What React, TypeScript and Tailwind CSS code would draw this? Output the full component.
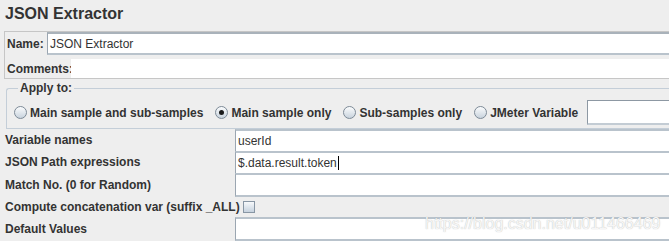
import React from "react";

const FONT = { fontFamily: '"Liberation Sans", Arial, sans-serif' };

function Radio({ checked }: { checked?: boolean }) {
  return (
    <span className="relative inline-flex h-[13px] w-[13px] shrink-0 items-center justify-center rounded-full border border-[#7d8a97] bg-gradient-to-b from-[#fbfcfd] to-[#c9d3dd]">
      {checked && <span className="h-[5px] w-[5px] rounded-full bg-[#1a1a1a]" />}
    </span>
  );
}

function RadioItem({ label, checked, first }: { label: string; checked?: boolean; first?: boolean }) {
  return (
    <div className={`flex items-center gap-[3px] ${first ? "" : "ml-[12px]"}`}>
      <Radio checked={checked} />
      <span className="font-bold">{label}</span>
    </div>
  );
}

function FieldRow({ label, value, cursor, bottom }: { label: string; value?: string; cursor?: boolean; bottom?: boolean }) {
  return (
    <div className="flex">
      <div className="flex w-[235px] shrink-0 items-center pl-[5px] font-bold">{label}</div>
      <div
        className={`flex flex-1 items-center border-l border-t-2 border-l-[#9ba6b1] border-t-[#b9c3cc] bg-white pl-[2px] h-[22px] ${
          bottom ? "h-[24px] border-b-2 border-b-[#b9c3cc]" : ""
        }`}
      >
        <span>{value}</span>
        {cursor && <span className="ml-[1px] inline-block h-[14px] w-[1px] bg-black" />}
      </div>
    </div>
  );
}

export default function App() {
  return (
    <div
      className="relative h-[241px] w-[669px] overflow-hidden bg-[#eeeeee] text-[12px] leading-[14px] text-[#333333]"
      style={FONT}
    >
      {/* Title */}
      <div className="h-[31px] pl-[5px] pt-[5px] text-[16px] font-bold leading-[18px] text-[#333333]">
        JSON Extractor
      </div>

      {/* Name / Comments box */}
      <div className="ml-[4px] h-[48px] border border-r-0 border-[#c6c6c6]">
        <div className="flex h-[23px]">
          <div className="flex w-[42px] shrink-0 items-center pl-[2px] font-bold">Name:</div>
          <div className="flex flex-1 items-center border-b-2 border-l border-t-2 border-b-[#b9c3cc] border-l-[#9ba6b1] border-t-[#a9b2ba] bg-white pl-[2px]">
            JSON Extractor
          </div>
        </div>
        <div className="flex h-[23px] pt-[4px]">
          <div className="flex w-[66px] shrink-0 items-center pl-[2px] font-bold">Comments:</div>
          <div className="flex-1 bg-white" />
        </div>
      </div>

      {/* Apply to fieldset */}
      <fieldset className="ml-[6px] mt-[2px] h-[48px] rounded-tl-[3px] border border-r-0 border-[#c4ced8] pl-[7px]">
        <legend className="ml-[4px] px-[2px] font-bold leading-[14px]">Apply to:</legend>
        <div className="mt-[5px] flex h-[25px] items-center">
          <RadioItem first label="Main sample and sub-samples" />
          <RadioItem checked label="Main sample only" />
          <RadioItem label="Sub-samples only" />
          <RadioItem label="JMeter Variable" />
          <div className="ml-[9px] h-[25px] flex-1 border-b-2 border-l border-t border-b-[#c3ccd4] border-l-[#8d98a3] border-t-[#8d98a3] bg-white" />
        </div>
      </fieldset>

      {/* Fields */}
      <div className="flex flex-col">
        <FieldRow label="Variable names" value="userId" />
        <FieldRow label="JSON Path expressions" value="$.data.result.token" cursor />
        <FieldRow label="Match No. (0 for Random)" bottom />
        <div className="flex h-[20px] items-center pl-[5px]">
          <span className="font-bold">Compute concatenation var (suffix _ALL)</span>
          <span className="ml-[3px] h-[12px] w-[12px] border border-[#8896a4] bg-gradient-to-b from-[#f7f9fb] to-[#c6d2de]" />
        </div>
        <FieldRow label="Default Values" bottom />
      </div>

      {/* Watermark */}
      <div className="pointer-events-none absolute left-[425px] top-[214px] text-[16px] leading-[20px] text-[#f6f6f6] [text-shadow:0_0_1px_rgba(120,120,120,0.55)]">
        https://blog.csdn.net/u011466469
      </div>
    </div>
  );
}
